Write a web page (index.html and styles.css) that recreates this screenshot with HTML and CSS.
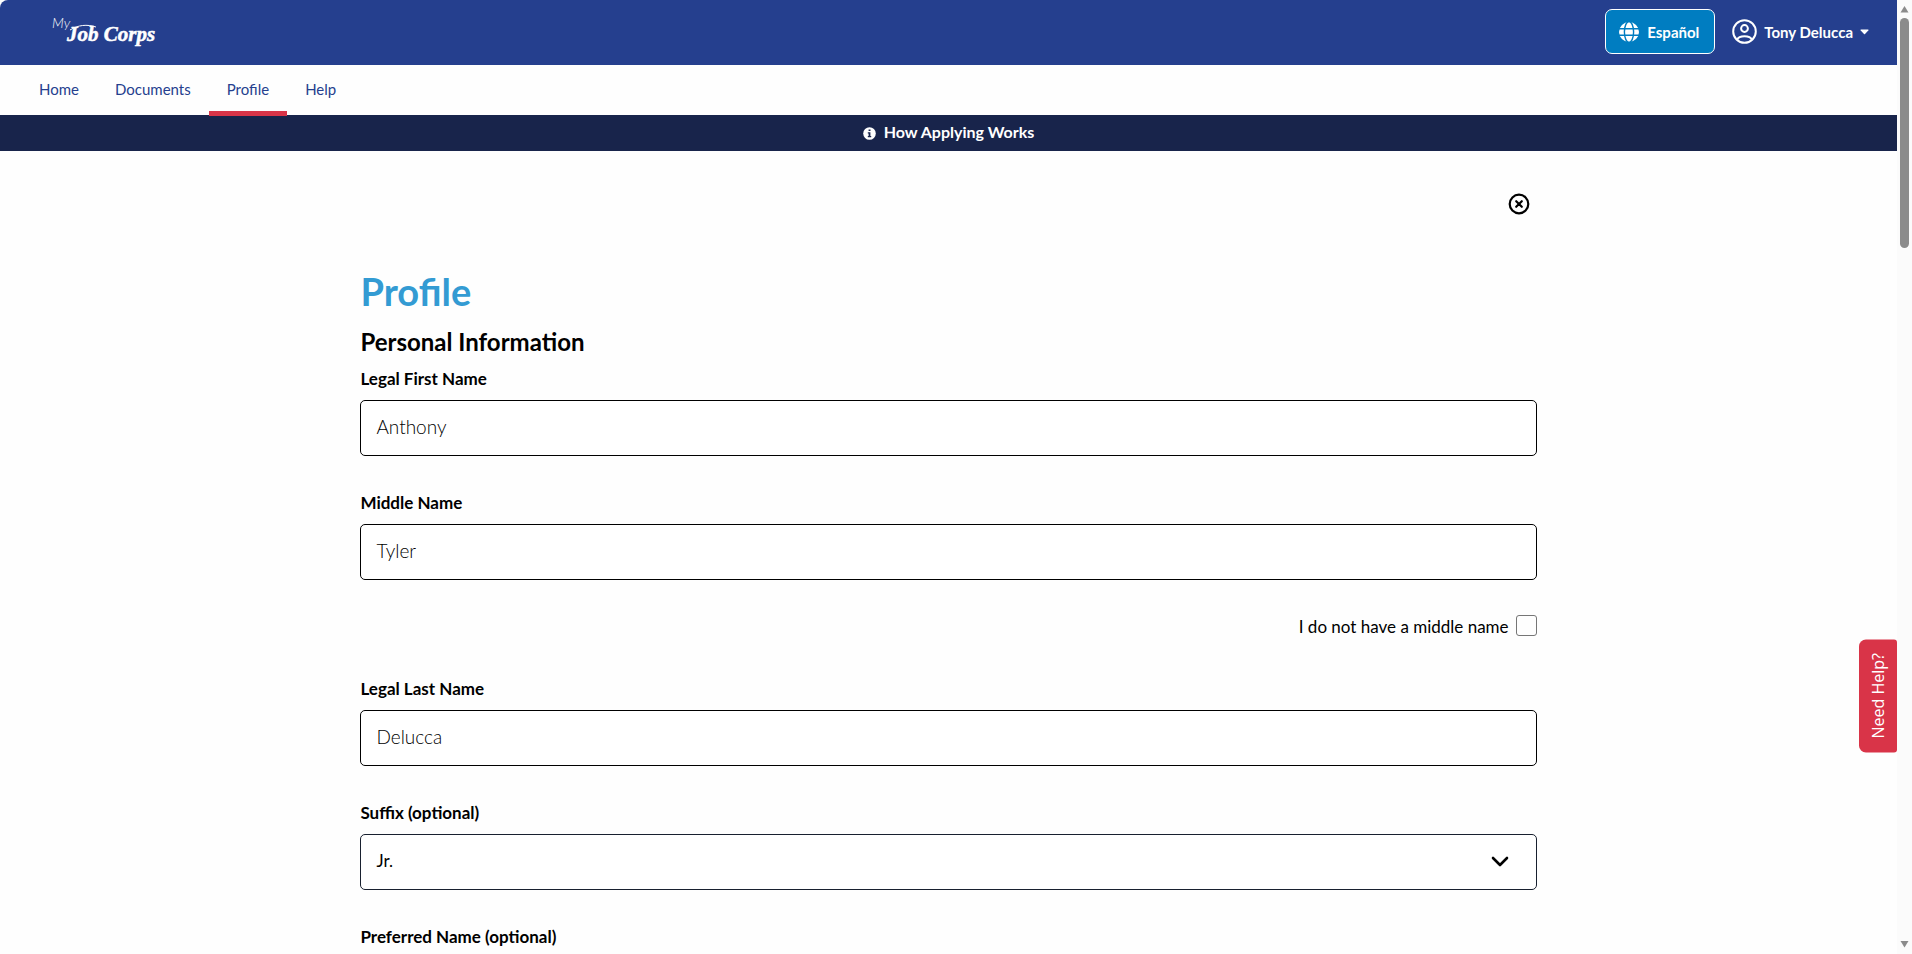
FILE: index.html
```html
<!DOCTYPE html>
<html lang="en">
<head>
    <meta charset="UTF-8">
    <meta name="viewport" content="width=device-width, initial-scale=1.0">
    <title>My Job Corps - Profile</title>
    <link rel="stylesheet" href="styles.css">
</head>
<body>

    <div class="page">
        <header class="topbar">
            <a class="logo" href="#" aria-label="My Job Corps">
                <svg width="120" height="36" viewBox="0 0 120 36">
                    <text class="logo-my" x="1" y="13">My</text>
                    <path d="M19 15 C27 10 36 9 45 12" fill="none" stroke="#fff" stroke-width="1"/>
                    <text class="logo-name" x="16" y="26">Job Corps</text>
                </svg>
            </a>
            <div class="topbar-right">
                <button class="lang-btn" type="button">
                    <svg width="20" height="20" viewBox="0 0 20 20">
                        <circle cx="10" cy="10" r="10" fill="#fff"/>
                        <g fill="none" stroke="#007dc1" stroke-width="1.4">
                            <ellipse cx="10" cy="10" rx="4.6" ry="10.4"/>
                            <path d="M0 6.8h20M0 13.2h20"/>
                        </g>
                    </svg>
                    Español
                </button>
                <button class="user-btn" type="button">
                    <svg width="25" height="25" viewBox="0 0 25 25" fill="none" stroke="#fff" stroke-width="2">
                        <circle cx="12.5" cy="12.5" r="11.3"/>
                        <circle cx="12.5" cy="9.5" r="3.4"/>
                        <path d="M5.2 20.6C7 16 18 16 19.8 20.6"/>
                    </svg>
                    <span>Tony Delucca</span>
                    <svg width="9" height="6" viewBox="0 0 9 6"><path d="M1 .5h7q.8.2.3.9L5 5q-.5.5-1 0L.7 1.4Q.2.7 1 .5z" fill="#fff"/></svg>
                </button>
            </div>
        </header>

        <nav class="menu">
            <a href="#">Home</a>
            <a href="#">Documents</a>
            <a class="active" href="#">Profile</a>
            <a href="#">Help</a>
        </nav>

        <a class="how-bar" href="#">
            <svg width="13" height="13" viewBox="0 0 13 13">
                <circle cx="6.5" cy="6.5" r="6.3" fill="#fff"/>
                <path d="M5.6 2.4h1.9v1.7H5.6zM4.8 5.3h2.6v3.7h.8v1.2H4.8V9h.8V6.5h-.8z" fill="#18244b"/>
            </svg>
            <span>How Applying Works</span>
        </a>

        <main class="content">
            <button class="close-btn" type="button" aria-label="Close">
                <svg width="22" height="22" viewBox="0 0 22 22" fill="none" stroke="#000" stroke-width="2.2">
                    <circle cx="11" cy="11" r="9.3"/>
                    <path d="M8.2 8.2l5.6 5.6M13.8 8.2l-5.6 5.6" stroke-linecap="round"/>
                </svg>
            </button>

            <h1>Profile</h1>
            <h2>Personal Information</h2>

            <form>
                <div class="field">
                    <label for="first">Legal First Name</label>
                    <input id="first" type="text" value="Anthony">
                </div>
                <div class="field">
                    <label for="middle">Middle Name</label>
                    <input id="middle" type="text" value="Tyler">
                </div>
                <div class="check-row">
                    <label for="no-middle">I do not have a middle name</label>
                    <input id="no-middle" type="checkbox">
                </div>
                <div class="field">
                    <label for="last">Legal Last Name</label>
                    <input id="last" type="text" value="Delucca">
                </div>
                <div class="field">
                    <label for="suffix">Suffix (optional)</label>
                    <div class="select-wrap">
                        <select id="suffix">
                            <option>Jr.</option>
                            <option>Sr.</option>
                            <option>II</option>
                            <option>III</option>
                        </select>
                        <svg width="18" height="12" viewBox="0 0 18 12"><path d="M2 2l7 7 7-7" fill="none" stroke="#000" stroke-width="2.6" stroke-linecap="round" stroke-linejoin="round"/></svg>
                    </div>
                </div>
                <div class="field">
                    <label for="preferred">Preferred Name (optional)</label>
                    <input id="preferred" type="text">
                </div>
            </form>
        </main>

        <button class="help-btn" type="button">Need Help?</button>
    </div>

    <div class="scrollbar" aria-hidden="true">
        <svg width="9" height="7" viewBox="0 0 9 7"><path d="M4.5 0L8.5 6.5h-8z" fill="#8b8b8b"/></svg>
        <div class="track"><div class="thumb"></div></div>
        <svg width="9" height="7" viewBox="0 0 9 7"><path d="M4.5 6.5L.5 0h8z" fill="#8b8b8b"/></svg>
    </div>

</body>
</html>
```
FILE: styles.css
```css
*{
    margin: 0;
    padding: 0;
    box-sizing: border-box;
}
body{
    display: flex;
    height: 100vh;
    overflow: hidden;
    font-family: "Lato", "Liberation Sans", sans-serif;
    font-size: 17px;
    color: #000;
    background-color: #fefefe;
}
button, input, select{
    font-family: inherit;
    font-size: inherit;
    color: inherit;
}
button{
    background: none;
    border: none;
    cursor: pointer;
}
a{
    text-decoration: none;
}
svg{
    display: block;
    flex-shrink: 0;
}
.page{
    position: relative;
    flex: 1;
    height: 100%;
    overflow: hidden;
}

/* header */
.topbar{
    display: flex;
    justify-content: space-between;
    height: 65px;
    padding: 9px 28px 11px 51px;
    border-top-left-radius: 8px;
    background-color: #253f8e;
    color: #fff;
}
.logo{
    padding-top: 6px;
}
.logo-my{
    font-family: "Lato", sans-serif;
    font-size: 14px;
    font-style: italic;
    font-weight: 300;
    fill: #fff;
}
.logo-name{
    font-family: "Liberation Serif", serif;
    font-size: 21px;
    font-style: italic;
    font-weight: bold;
    fill: #fff;
    stroke: #fff;
    stroke-width: 0.5px;
}
.topbar-right{
    display: flex;
    align-items: stretch;
    gap: 17px;
    font-size: 15px;
    line-height: 20px;
}
.lang-btn, .user-btn{
    display: flex;
    align-items: center;
    font-weight: bold;
}
.lang-btn{
    gap: 8px;
    padding: 0 15px 0 13px;
    border: 1px solid #fff;
    border-radius: 7px;
    background-color: #007dc1;
}
.user-btn{
    gap: 7px;
}

/* menu */
.menu{
    display: flex;
    height: 50px;
    padding-left: 21px;
}
.menu a{
    height: 51px;
    padding: 15px 18px 0;
    border-bottom: 5px solid transparent;
    font-size: 15px;
    line-height: 18px;
    color: #253f8e;
}
.menu .active{
    position: relative;
    border-color: #d93448;
}
.how-bar{
    display: flex;
    justify-content: center;
    align-items: center;
    gap: 8px;
    height: 36px;
    background-color: #18244b;
    color: #fff;
    font-size: 16px;
    font-weight: bold;
}
.how-bar span{
    padding-bottom: 3px;
}

/* profile form */
.content{
    width: 62%;
    margin: 0 auto;
    padding-top: 42px;
}
.close-btn{
    display: block;
    margin: 0 7px 0 auto;
}
h1{
    margin-top: 52px;
    font-size: 38px;
    line-height: 48px;
    color: #339bd3;
}
h2{
    margin-top: 12px;
    font-size: 24px;
    line-height: 30px;
}
.field{
    margin-bottom: 35px;
}
.field:first-child{
    margin-top: 10px;
}
.field label{
    display: block;
    margin-bottom: 10px;
    font-weight: bold;
    line-height: 23px;
}
.field input, .field select{
    display: block;
    width: 100%;
    height: 56px;
    padding: 0 15px 3px;
    border: 1px solid #000;
    border-radius: 5px;
    background-color: #fff;
    font-size: 19px;
    font-weight: 300;
}
.check-row{
    display: flex;
    justify-content: flex-end;
    align-items: center;
    gap: 7px;
    margin-bottom: 41px;
}
.check-row label{
    padding-top: 2px;
    line-height: 19px;
}
.check-row input{
    appearance: none;
    width: 21px;
    height: 21px;
    border: 1px solid #767676;
    border-radius: 3px;
}
.select-wrap{
    display: grid;
    align-items: center;
}
.select-wrap select, .select-wrap svg{
    grid-area: 1 / 1;
}
.select-wrap select{
    appearance: none;
    border-color: #18202f;
    font-weight: normal;
    font-size: 17px;
}
.select-wrap svg{
    justify-self: end;
    margin-right: 28px;
    pointer-events: none;
}

/* side tab over the page */
.help-btn{
    position: absolute;
    right: 0;
    top: 67%;
    padding: 14px 10px;
    border-radius: 3px 7px 7px 3px;
    background-color: #d93448;
    color: #fff;
    font-family: "Open Sans", sans-serif;
    font-size: 16px;
    line-height: 18px;
    writing-mode: vertical-rl;
    transform: rotate(180deg);
}

/* scrollbar */
.scrollbar{
    display: flex;
    flex-direction: column;
    align-items: center;
    gap: 5px;
    width: 15px;
    padding: 6px 0;
    background-color: #fbfbfb;
}
.track{
    flex: 1;
}
.thumb{
    width: 9px;
    height: 25%;
    border-radius: 5px;
    background-color: #8b8b8b;
}
```
